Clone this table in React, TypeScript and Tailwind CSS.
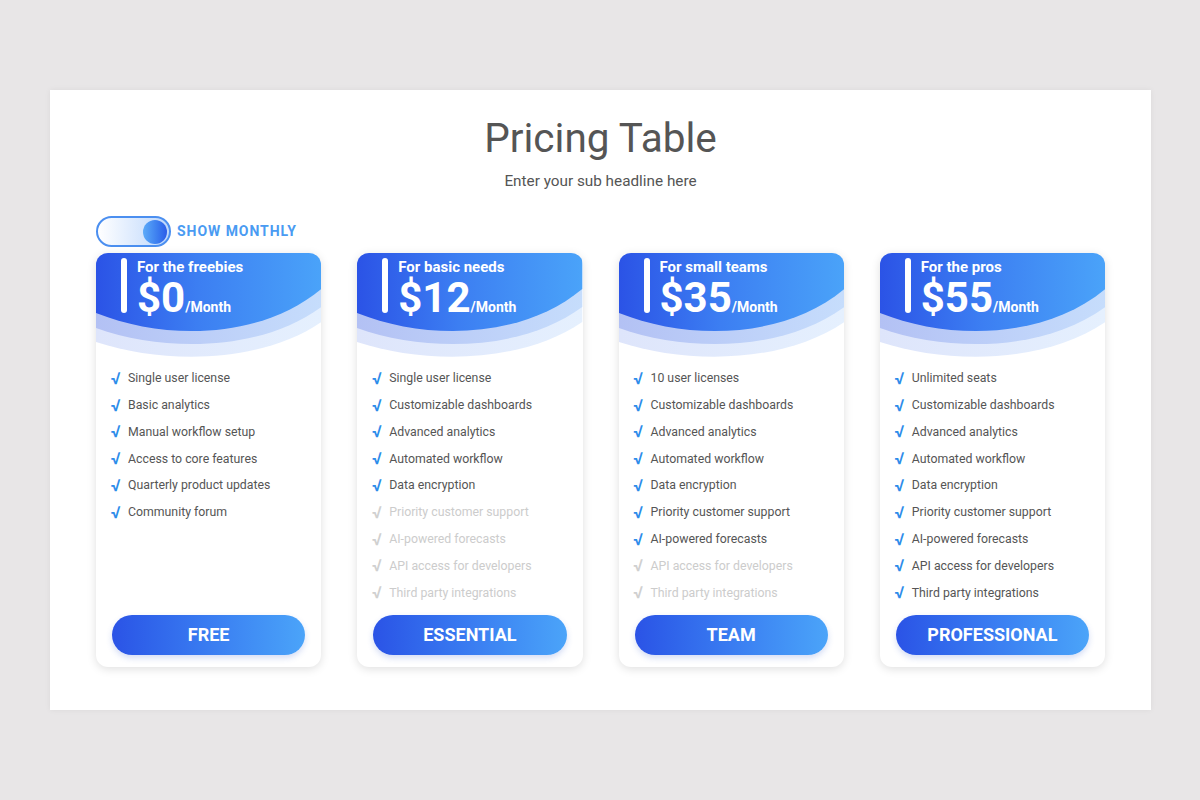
import React from 'react';

type Plan = {
  tag: string;
  price: string;
  button: string;
  features: { text: string; on: boolean }[];
};

const plans: Plan[] = [
  {
    tag: 'For the freebies',
    price: '$0',
    button: 'FREE',
    features: [
      { text: 'Single user license', on: true },
      { text: 'Basic analytics', on: true },
      { text: 'Manual workflow setup', on: true },
      { text: 'Access to core features', on: true },
      { text: 'Quarterly product updates', on: true },
      { text: 'Community forum', on: true },
    ],
  },
  {
    tag: 'For basic needs',
    price: '$12',
    button: 'ESSENTIAL',
    features: [
      { text: 'Single user license', on: true },
      { text: 'Customizable dashboards', on: true },
      { text: 'Advanced analytics', on: true },
      { text: 'Automated workflow', on: true },
      { text: 'Data encryption', on: true },
      { text: 'Priority customer support', on: false },
      { text: 'AI-powered forecasts', on: false },
      { text: 'API access for developers', on: false },
      { text: 'Third party integrations', on: false },
    ],
  },
  {
    tag: 'For small teams',
    price: '$35',
    button: 'TEAM',
    features: [
      { text: '10 user licenses', on: true },
      { text: 'Customizable dashboards', on: true },
      { text: 'Advanced analytics', on: true },
      { text: 'Automated workflow', on: true },
      { text: 'Data encryption', on: true },
      { text: 'Priority customer support', on: true },
      { text: 'AI-powered forecasts', on: true },
      { text: 'API access for developers', on: false },
      { text: 'Third party integrations', on: false },
    ],
  },
  {
    tag: 'For the pros',
    price: '$55',
    button: 'PROFESSIONAL',
    features: [
      { text: 'Unlimited seats', on: true },
      { text: 'Customizable dashboards', on: true },
      { text: 'Advanced analytics', on: true },
      { text: 'Automated workflow', on: true },
      { text: 'Data encryption', on: true },
      { text: 'Priority customer support', on: true },
      { text: 'AI-powered forecasts', on: true },
      { text: 'API access for developers', on: true },
      { text: 'Third party integrations', on: true },
    ],
  },
];

// wavy blue header background, drawn once per card
function HeaderWave({ id }: { id: number }) {
  return (
    <svg className="absolute inset-0 h-full w-full" viewBox="0 0 225 110" preserveAspectRatio="none">
      <defs>
        <linearGradient id={`hb-${id}`} x1="0" y1="0" x2="1" y2="0">
          <stop offset="0%" stopColor="#2b53e6" />
          <stop offset="45%" stopColor="#3c7ef2" />
          <stop offset="100%" stopColor="#4aa3f9" />
        </linearGradient>
        <linearGradient id={`hm-${id}`} x1="0" y1="0" x2="1" y2="0">
          <stop offset="0%" stopColor="#b3c1f4" />
          <stop offset="100%" stopColor="#c6ddfc" />
        </linearGradient>
        <linearGradient id={`hl-${id}`} x1="0" y1="0" x2="1" y2="0">
          <stop offset="0%" stopColor="#dee5fb" />
          <stop offset="100%" stopColor="#e5f0fe" />
        </linearGradient>
      </defs>
      <path d="M0 0 H225 V69 C165 110 70 112 0 89 Z" fill={`url(#hl-${id})`} />
      <path d="M0 0 H225 V54 C165 98 70 100 0 75 Z" fill={`url(#hm-${id})`} />
      <path d="M0 0 H225 V36 C165 86 70 88 0 60 Z" fill={`url(#hb-${id})`} />
    </svg>
  );
}

function Card({ plan, idx }: { plan: Plan; idx: number }) {
  return (
    <div className="flex h-[414px] flex-col overflow-hidden rounded-[12px] bg-white shadow-[0_2px_10px_rgba(0,0,0,0.13)]">
      <div className="relative h-[110px] shrink-0">
        <HeaderWave id={idx} />
        <div className="relative flex pl-[25px] pt-[5px]">
          <div className="h-[55px] w-[6px] rounded-full bg-white" />
          <div className="ml-[10px] text-white">
            <div className="text-[15px] font-bold leading-[18px]">{plan.tag}</div>
            <div className="mt-[2px] flex items-baseline">
              <span className="text-[42px] font-bold leading-[40px]">{plan.price}</span>
              <span className="text-[14px] font-bold">/Month</span>
            </div>
          </div>
        </div>
      </div>
      <ul className="pl-[15px] pt-[2px]">
        {plan.features.map((f) => (
          <li key={f.text} className="flex h-[26.8px] items-center">
            <span
              className={`w-[17px] text-[17px] font-semibold leading-none ${f.on ? 'text-[#2d8cea]' : 'text-[#d0d0d0]'}`}
            >
              √
            </span>
            <span className={`text-[12.3px] ${f.on ? 'text-[#555555]' : 'text-[#cccccc]'}`}>{f.text}</span>
          </li>
        ))}
      </ul>
      <div className="mt-auto px-[16px] pb-[12px]">
        <button className="flex h-[40px] w-full items-center justify-center rounded-full bg-gradient-to-r from-[#2b53e6] via-[#3a7cf1] to-[#4ba4f9] text-[18px] font-bold leading-none text-white shadow-[0_3px_6px_rgba(40,80,200,0.2)]">
          {plan.button}
        </button>
      </div>
    </div>
  );
}

export default function App() {
  return (
    <div
      className="h-[800px] w-[1200px] bg-[#e8e6e7] pt-[90px]"
      style={{ fontFamily: 'Roboto, "Liberation Sans", sans-serif' }}
    >
      <div className="ml-[50px] h-[620px] w-[1101px] bg-white pt-[24px] shadow-[0_0_6px_rgba(0,0,0,0.06)]">
        <h1 className="text-center text-[40.5px] leading-[48px] text-[#555555]">Pricing Table</h1>
        <p className="mt-[9px] text-center text-[15.3px] leading-[20px] text-[#555555]">Enter your sub headline here</p>

        <div className="mt-[25px] flex items-center pl-[46px]">
          <div className="flex h-[31px] w-[75px] items-center justify-end rounded-full border-2 border-[#4b8ff0] bg-gradient-to-r from-white to-[#bcd6fb] pr-[2px]">
            <div className="h-[24px] w-[24px] rounded-full bg-gradient-to-r from-[#5eabf8] to-[#2c5ce8]" />
          </div>
          <span className="ml-[6px] text-[14px] font-bold tracking-[0.95px] text-[#4a9bf2]">SHOW MONTHLY</span>
        </div>

        <div className="mt-[6px] grid grid-cols-4 gap-[36px] px-[46px]">
          {plans.map((p, i) => (
            <Card key={p.button} plan={p} idx={i} />
          ))}
        </div>
      </div>
    </div>
  );
}
